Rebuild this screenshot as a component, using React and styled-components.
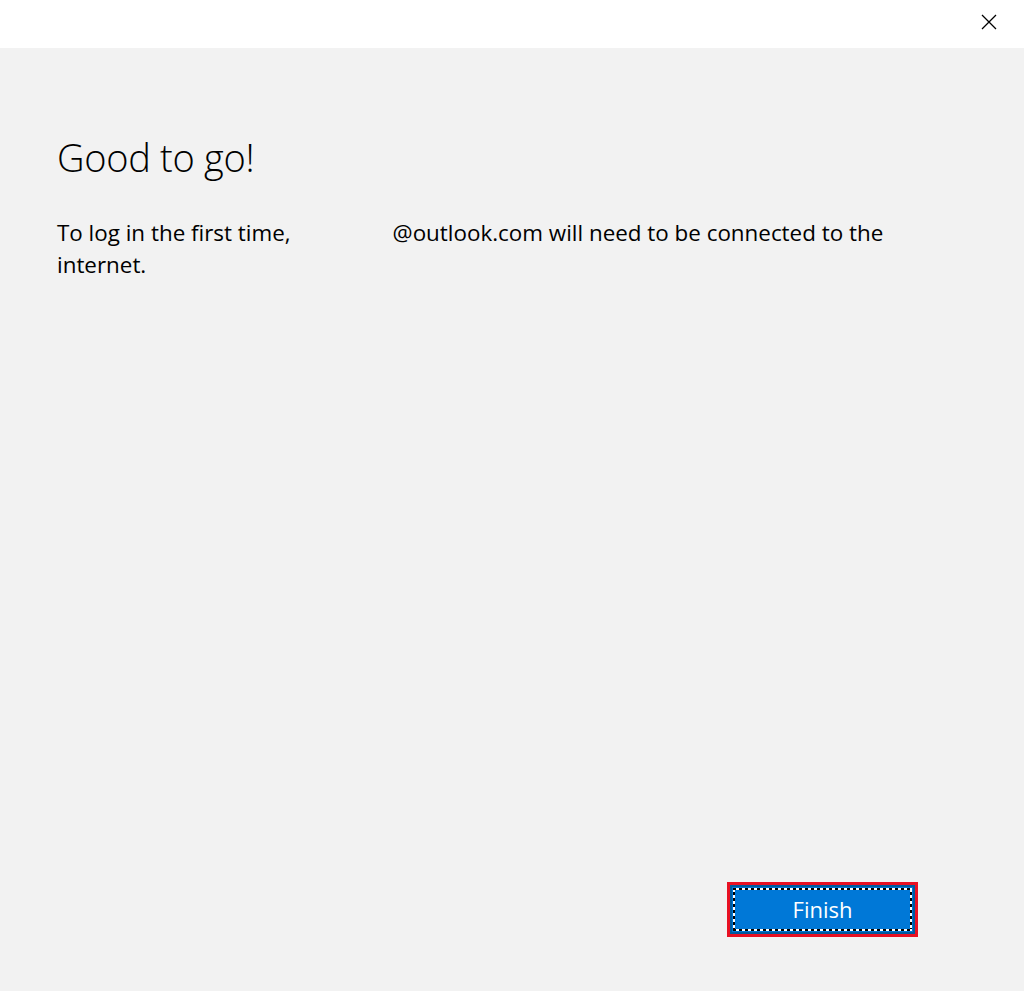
import React from 'react'
import styled, { createGlobalStyle } from 'styled-components'

const Global = createGlobalStyle`
  html, body {
    margin: 0;
    padding: 0;
  }
  body {
    font-family: "Open Sans", "Noto Sans", "Liberation Sans", sans-serif;
    background: #f2f2f2;
  }
`

const Window = styled.div`
  width: 1024px;
  height: 991px;
  display: flex;
  flex-direction: column;
  background: #f2f2f2;
`

const TitleBar = styled.div`
  height: 48px;
  background: #ffffff;
  display: flex;
  justify-content: flex-end;
  align-items: center;
  padding-right: 24px;
  flex-shrink: 0;
`

const Close = styled.button`
  width: 22px;
  height: 22px;
  padding: 0;
  border: none;
  background: none;
  display: flex;
  align-items: center;
  justify-content: center;
  cursor: pointer;
  margin-top: -4px;
`

const Content = styled.main`
  flex: 1;
  display: flex;
  flex-direction: column;
  padding: 84px 0 0 57px;
`

const Title = styled.h1`
  margin: 0;
  font-size: 38px;
  font-weight: 300;
  color: #000;
  line-height: 50px;
  letter-spacing: -0.3px;
`

const Message = styled.div`
  margin-top: 35px;
  font-size: 22.4px;
  line-height: 32px;
  font-weight: 400;
  color: #000;
`

// the account name is blanked out in the original, so the line keeps a gap
const Line = styled.div`
  display: flex;
  gap: ${p => p.gap || 0}px;
  white-space: nowrap;
`

const Footer = styled.div`
  display: flex;
  justify-content: flex-end;
  padding: 0 106px 54px 0;
`

const Ring = styled.div`
  border: 3px solid #e81123;
  display: flex;
`

const stripes = (deg) => `repeating-linear-gradient(${deg}deg, #000 0 3px, #fff 3px 6px)`

const Button = styled.button`
  width: 185px;
  height: 49px;
  background: #0078d7;
  border: 2px solid #005a9e;
  padding: 0 0 2px;
  position: relative;
  font-family: inherit;
  font-size: 22px;
  color: #fff;
  cursor: pointer;

  &::after {
    content: '';
    position: absolute;
    inset: 1px;
    background:
      ${stripes(90)} top / 100% 2px no-repeat,
      ${stripes(90)} bottom / 100% 2px no-repeat,
      ${stripes(0)} left / 2px 100% no-repeat,
      ${stripes(0)} right / 2px 100% no-repeat;
  }
`

const Label = styled.span`
  position: relative;
  z-index: 1;
`

export default function App() {
  return (
    <Window>
      <Global />
      <TitleBar>
        <Close aria-label="Close">
          <svg width="16" height="16" viewBox="0 0 16 16">
            <path d="M1 1 L15 15 M15 1 L1 15" stroke="#000" strokeWidth="1.3" fill="none" />
          </svg>
        </Close>
      </TitleBar>
      <Content>
        <Title>Good to go!</Title>
        <Message>
          <Line gap={102}>
            <span>To log in the first time,</span>
            <span>@outlook.com will need to be connected to the</span>
          </Line>
          <Line>internet.</Line>
        </Message>
      </Content>
      <Footer>
        <Ring>
          <Button><Label>Finish</Label></Button>
        </Ring>
      </Footer>
    </Window>
  )
}
